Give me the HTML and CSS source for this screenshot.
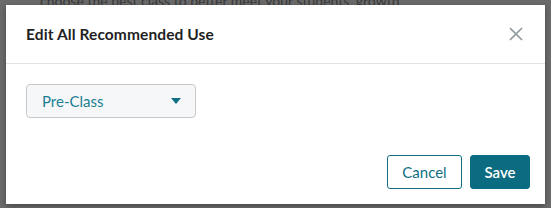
FILE: index.html
```html
<!DOCTYPE html>
<html lang="en">
<head>
    <meta charset="UTF-8">
    <title>Edit All Recommended Use</title>
    <link rel="stylesheet" href="styles.css">
</head>
<body>
    <div class="backdrop-text">choose the best class to better meet your students' growth</div>
    <div class="modal">
        <div class="modal-header">
            <h2>Edit All Recommended Use</h2>
            <button class="close-btn" aria-label="Close">
                <svg width="14" height="14" viewBox="0 0 14 14">
                    <path d="M1 1 L13 13 M13 1 L1 13" stroke="#8e979c" stroke-width="1.6" fill="none"/>
                </svg>
            </button>
        </div>

        <div class="modal-body">
            <div class="select">
                <span>Pre-Class</span>
                <svg width="10" height="6" viewBox="0 0 10 6">
                    <path d="M0 0 L10 0 L5 6 Z" fill="#0f6f84"/>
                </svg>
            </div>
        </div>

        <div class="modal-footer">
            <button class="btn btn-outline">Cancel</button>
            <button class="btn btn-primary">Save</button>
        </div>
    </div>
</body>
</html>
```

FILE: styles.css
```css
* {
    margin: 0;
    padding: 0;
    box-sizing: border-box;
}

body {
    background: #6b6b6b;
    font-family: 'Lato', 'Open Sans', sans-serif;
    padding: 5px 6px;
    position: relative;
    overflow: hidden;
}

.backdrop-text {
    position: absolute;
    top: -8px;
    left: 40px;
    font-size: 14px;
    color: #3a3a3a;
    white-space: nowrap;
}

.modal {
    position: relative;
    width: 539px;
    height: 199px;
    background: white;
    box-shadow: 0 2px 6px rgba(0, 0, 0, 0.35);
    display: flex;
    flex-direction: column;
}

.modal-header {
    height: 59px;
    display: flex;
    align-items: center;
    justify-content: space-between;
    padding: 0 20px 0 20px;
    border-bottom: 1px solid #e3e3e3;
}

.modal-header h2 {
    font-size: 15.5px;
    font-weight: 700;
    color: #1f1f24;
    letter-spacing: 0.1px;
}

.close-btn {
    background: none;
    border: none;
    display: flex;
    margin-right: 2px;
    cursor: pointer;
}

.modal-body {
    flex: 1;
    padding: 20px 20px 0 20px;
}

.select {
    width: 170px;
    height: 34px;
    border: 1px solid #c9c9c9;
    border-radius: 4px;
    background: #f6f7f8;
    display: flex;
    align-items: center;
    justify-content: space-between;
    padding: 0 14px 0 15px;
    color: #1c7f94;
    font-size: 15px;
}

.modal-footer {
    display: flex;
    justify-content: flex-end;
    gap: 8px;
    padding: 0 15px 15px 0;
}

.btn {
    height: 34px;
    border-radius: 3px;
    font-family: inherit;
    font-size: 15px;
    cursor: pointer;
}

.btn-outline {
    width: 75px;
    background: white;
    border: 1px solid #106f83;
    color: #106f83;
}

.btn-primary {
    width: 60px;
    background: #0b6b80;
    border: 1px solid #0b6b80;
    color: white;
    font-weight: 600;
}
```
